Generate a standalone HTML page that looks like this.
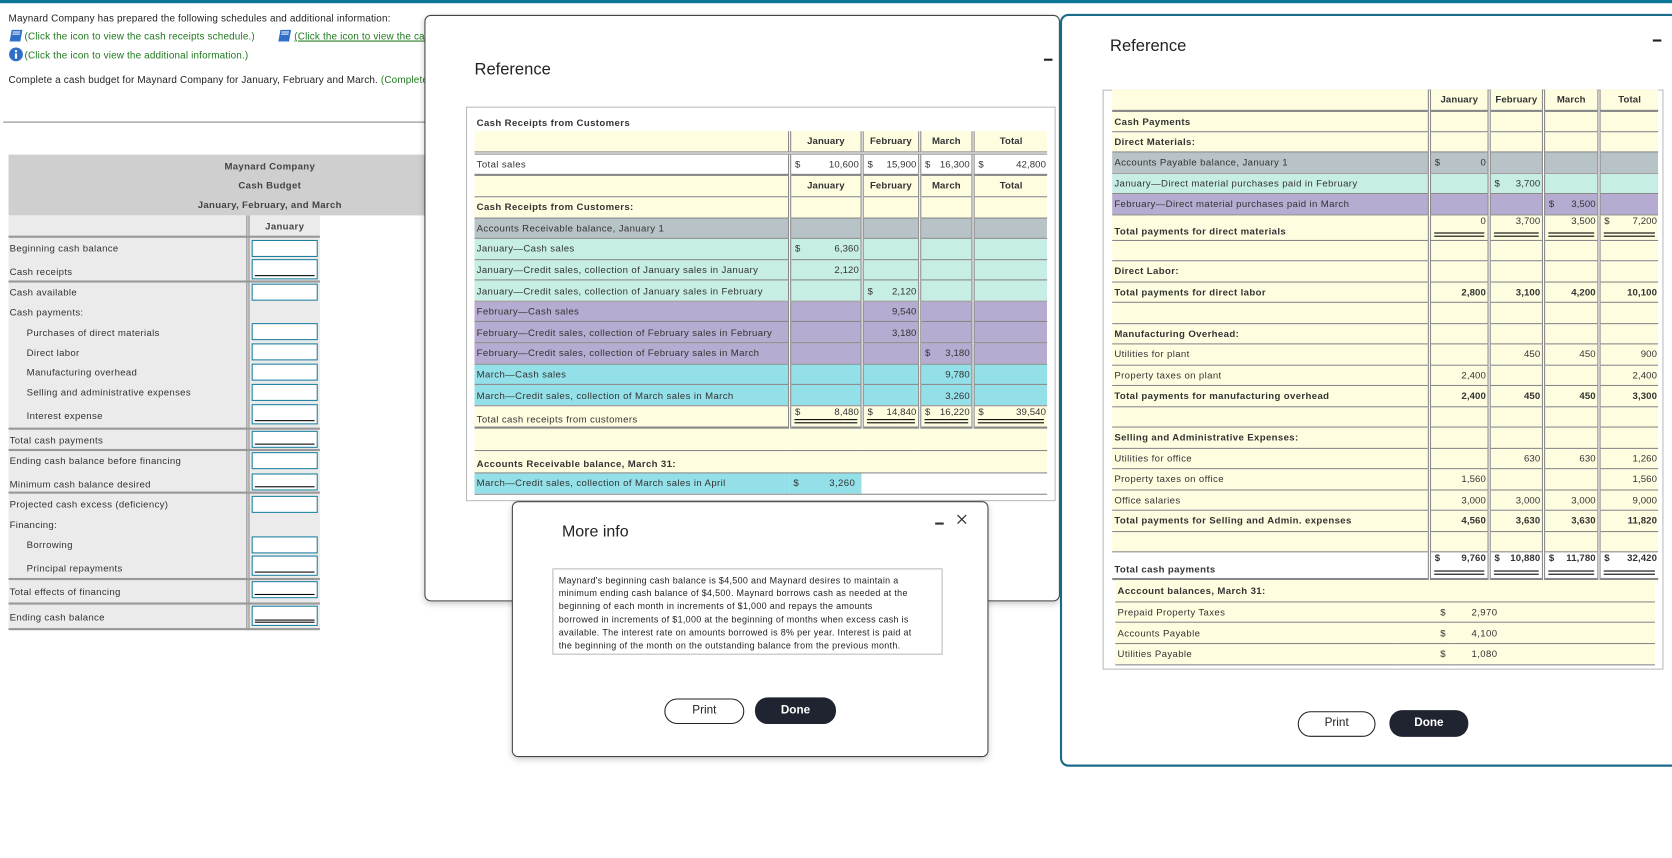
<!DOCTYPE html>
<html><head><meta charset="utf-8">
<style>
html,body{margin:0;padding:0;background:#fff;overflow:hidden;width:1672px;height:858px}
#w{position:absolute;left:0;top:0;width:1568px;height:805px;transform:scale(1.06633);transform-origin:0 0;font-family:"Liberation Sans",Arial,sans-serif;color:#222}
.a{position:absolute;white-space:nowrap}
.s9{font-size:9.3px;letter-spacing:.15px}
.g{color:#1f7a1f}
.hr{position:absolute;height:2px;background:#999}
.inp{position:absolute;left:236px;width:60px;height:14px;border:1px solid #1a7fa0;background:#fff}
.inp.u::after{content:"";position:absolute;left:2px;right:2px;bottom:2px;height:1px;background:#000}
.inp.dd::after{content:"";position:absolute;left:2px;right:2px;bottom:2px;height:3px;border-top:1px solid #000;border-bottom:1px solid #000;box-sizing:border-box}
.lbl{position:absolute;font-size:9px;letter-spacing:.3px;color:#333;white-space:nowrap}
.modal{position:absolute;background:#fff;border:1px solid #444;border-radius:6px;box-shadow:0 2px 6px rgba(0,0,0,.2)}
.t{position:absolute;border-collapse:collapse;table-layout:fixed;font-size:9px;letter-spacing:.35px;color:#333}
.t td{padding:0 2px;border-bottom:1px solid #888;white-space:nowrap;overflow:hidden;vertical-align:middle}
.t td.n{border-left:3px double #888;text-align:right;padding-right:1px;letter-spacing:.1px}
.t .d{float:left;padding-left:2px}
.b{font-weight:bold}
.c{text-align:center!important}
.cr{background:#fefde0}
.gr{background:#b8c3c7}
.mi{background:#c6eee4}
.lv{background:#b6abd0}
.cy{background:#93e0e8}
.dbl{background-image:linear-gradient(#000,#000),linear-gradient(#000,#000);background-size:calc(100% - 6px) 1px,calc(100% - 6px) 1px;background-position:3px calc(100% - 6px),3px calc(100% - 3px);background-repeat:no-repeat}
.btn{position:absolute;height:22px;border-radius:12px;font-size:11px;text-align:center;line-height:22px;box-sizing:border-box}
.pr{border:1.5px solid #222;color:#222;background:#fff}
.dn{background:#1f2430;color:#fff;font-weight:bold}
</style></head><body><div id="w">
<div class="a" style="left:0;top:0;width:1568px;height:3px;background:#0b7497"></div>

<div class="a s9" style="left:8px;top:12px">Maynard Company has prepared the following schedules and additional information:</div>
<svg class="a" style="left:8px;top:27px" width="14" height="13" viewBox="0 0 14 13"><path d="M3 1h10l-2 11H1z" fill="#2f6fc7"/><path d="M4 3h7M3.6 5h7" stroke="#fff" stroke-width="1"/><path d="M1 12h9" stroke="#9cc3ef" stroke-width="1"/></svg>
<div class="a s9 g" style="left:23px;top:29px">(Click the icon to view the cash receipts schedule.)</div>
<svg class="a" style="left:260px;top:27px" width="14" height="13" viewBox="0 0 14 13"><path d="M3 1h10l-2 11H1z" fill="#2f6fc7"/><path d="M4 3h7M3.6 5h7" stroke="#fff" stroke-width="1"/><path d="M1 12h9" stroke="#9cc3ef" stroke-width="1"/></svg>
<div class="a s9 g" style="left:276px;top:29px;text-decoration:underline">(Click the icon to view the cash payments schedule.)</div>
<svg class="a" style="left:8px;top:44px" width="14" height="14" viewBox="0 0 14 14"><circle cx="7" cy="7" r="6.5" fill="#2f6fc7"/><rect x="6" y="6" width="2" height="5" fill="#fff"/><circle cx="7" cy="4" r="1.1" fill="#fff"/></svg>
<div class="a s9 g" style="left:23px;top:47px">(Click the icon to view the additional information.)</div>
<div class="a s9" style="left:8px;top:70px">Complete a cash budget for Maynard Company for January, February and March. <span class="g">(Complete all input fields.)</span></div>
<div class="hr" style="left:3px;top:114px;width:400px;height:1px;background:#888"></div>

<!-- Cash budget -->
<div class="a" style="left:8px;top:145px;width:400px;height:57px;background:#cfcfcf"></div>
<div class="a b" style="left:8px;top:151px;width:490px;text-align:center;font-size:9px;letter-spacing:.3px;color:#444">Maynard Company</div>
<div class="a b" style="left:8px;top:169px;width:490px;text-align:center;font-size:9px;letter-spacing:.3px;color:#444">Cash Budget</div>
<div class="a b" style="left:8px;top:187px;width:490px;text-align:center;font-size:9px;letter-spacing:.3px;color:#444">January, February, and March</div>
<div class="a" style="left:8px;top:202px;width:292px;height:389px;background:#ebebeb"></div>
<div class="a" style="left:231px;top:202px;width:1px;height:389px;background:#888"></div>
<div class="a" style="left:233px;top:202px;width:1px;height:389px;background:#888"></div>
<div class="a b" style="left:234px;top:207px;width:66px;text-align:center;font-size:9px;letter-spacing:.3px;color:#444">January</div>
<div class="hr" style="left:8px;top:221px;width:292px"></div>
<div class="hr" style="left:8px;top:263px;width:292px"></div>
<div class="hr" style="left:8px;top:401px;width:292px"></div>
<div class="hr" style="left:8px;top:421px;width:292px"></div>
<div class="hr" style="left:8px;top:461px;width:292px"></div>
<div class="hr" style="left:8px;top:542px;width:292px"></div>
<div class="hr" style="left:8px;top:565px;width:292px"></div>
<div class="hr" style="left:8px;top:589px;width:292px"></div>

<div class="lbl" style="left:9px;top:228px">Beginning cash balance</div><div class="inp" style="top:225px"></div>
<div class="lbl" style="left:9px;top:250px">Cash receipts</div><div class="inp u" style="top:243px;height:17px"></div>
<div class="lbl" style="left:9px;top:269px">Cash available</div><div class="inp" style="top:266px"></div>
<div class="lbl" style="left:9px;top:288px">Cash payments:</div>
<div class="lbl" style="left:25px;top:307px">Purchases of direct materials</div><div class="inp" style="top:303px"></div>
<div class="lbl" style="left:25px;top:326px">Direct labor</div><div class="inp" style="top:322px"></div>
<div class="lbl" style="left:25px;top:344px">Manufacturing overhead</div><div class="inp" style="top:341px"></div>
<div class="lbl" style="left:25px;top:363px">Selling and administrative expenses</div><div class="inp" style="top:360px"></div>
<div class="lbl" style="left:25px;top:385px">Interest expense</div><div class="inp u" style="top:379px;height:17px"></div>
<div class="lbl" style="left:9px;top:408px">Total cash payments</div><div class="inp u" style="top:404px"></div>
<div class="lbl" style="left:9px;top:427px">Ending cash balance before financing</div><div class="inp" style="top:424px"></div>
<div class="lbl" style="left:9px;top:449px">Minimum cash balance desired</div><div class="inp u" style="top:444px"></div>
<div class="lbl" style="left:9px;top:468px">Projected cash excess (deficiency)</div><div class="inp" style="top:465px"></div>
<div class="lbl" style="left:9px;top:487px">Financing:</div>
<div class="lbl" style="left:25px;top:506px">Borrowing</div><div class="inp" style="top:503px"></div>
<div class="lbl" style="left:25px;top:528px">Principal repayments</div><div class="inp u" style="top:521px;height:17px"></div>
<div class="lbl" style="left:9px;top:550px">Total effects of financing</div><div class="inp u" style="top:545px"></div>
<div class="lbl" style="left:9px;top:574px">Ending cash balance</div><div class="inp dd" style="top:568px;height:17px"></div>

<!-- Modal 1 -->
<div class="modal" style="left:398px;top:14px;width:594px;height:548px"></div>
<div class="a" style="left:445px;top:57px;font-size:15.5px">Reference</div>
<div class="a b" style="left:979px;top:55px;width:8px;height:2px;background:#222"></div>
<div class="a" style="left:437px;top:100px;width:551px;height:368px;border:1px solid #bbb"></div>
<div class="a b" style="left:447px;top:110px;font-size:9px;letter-spacing:.35px;color:#333">Cash Receipts from Customers</div>
<table class="t" style="left:445px;top:123px;width:537px">
<colgroup><col style="width:295px"><col style="width:68px"><col style="width:54px"><col style="width:50px"><col style="width:70px"></colgroup>
<tr class="cr b" style="height:20px"><td style="border-bottom:3px double #888"></td><td class="n c" style="border-bottom:3px double #888">January</td><td class="n c" style="border-bottom:3px double #888">February</td><td class="n c" style="border-bottom:3px double #888">March</td><td class="n c" style="border-bottom:3px double #888">Total</td></tr>
<tr style="height:21px"><td style="border-bottom:2px solid #888">Total sales</td><td class="n" style="border-bottom:2px solid #888"><span class="d">$</span>10,600</td><td class="n" style="border-bottom:2px solid #888"><span class="d">$</span>15,900</td><td class="n" style="border-bottom:2px solid #888"><span class="d">$</span>16,300</td><td class="n" style="border-bottom:2px solid #888"><span class="d">$</span>42,800</td></tr>
<tr class="cr b" style="height:20px"><td></td><td class="n c">January</td><td class="n c">February</td><td class="n c">March</td><td class="n c">Total</td></tr>
<tr class="cr" style="height:20px"><td class="b">Cash Receipts from Customers:</td><td class="n"></td><td class="n"></td><td class="n"></td><td class="n"></td></tr>
<tr class="gr" style="height:19.6px"><td>Accounts Receivable balance, January 1</td><td class="n"></td><td class="n"></td><td class="n"></td><td class="n"></td></tr>
<tr class="mi" style="height:19.6px"><td>January—Cash sales</td><td class="n"><span class="d">$</span>6,360</td><td class="n"></td><td class="n"></td><td class="n"></td></tr>
<tr class="mi" style="height:19.6px"><td>January—Credit sales, collection of January sales in January</td><td class="n">2,120</td><td class="n"></td><td class="n"></td><td class="n"></td></tr>
<tr class="mi" style="height:19.6px"><td>January—Credit sales, collection of January sales in February</td><td class="n"></td><td class="n"><span class="d">$</span>2,120</td><td class="n"></td><td class="n"></td></tr>
<tr class="lv" style="height:19.6px"><td>February—Cash sales</td><td class="n"></td><td class="n">9,540</td><td class="n"></td><td class="n"></td></tr>
<tr class="lv" style="height:19.6px"><td>February—Credit sales, collection of February sales in February</td><td class="n"></td><td class="n">3,180</td><td class="n"></td><td class="n"></td></tr>
<tr class="lv" style="height:19.6px"><td>February—Credit sales, collection of February sales in March</td><td class="n"></td><td class="n"></td><td class="n"><span class="d">$</span>3,180</td><td class="n"></td></tr>
<tr class="cy" style="height:19.6px"><td>March—Cash sales</td><td class="n"></td><td class="n"></td><td class="n">9,780</td><td class="n"></td></tr>
<tr class="cy" style="height:19.6px"><td>March—Credit sales, collection of March sales in March</td><td class="n"></td><td class="n"></td><td class="n">3,260</td><td class="n"></td></tr>
<tr class="cr" style="height:21px"><td style="vertical-align:bottom;padding-bottom:2px;border-bottom:2px solid #888">Total cash receipts from customers</td><td class="n dbl" style="vertical-align:top;border-bottom:2px solid #888"><span class="d">$</span>8,480</td><td class="n dbl" style="vertical-align:top;border-bottom:2px solid #888"><span class="d">$</span>14,840</td><td class="n dbl" style="vertical-align:top;border-bottom:2px solid #888"><span class="d">$</span>16,220</td><td class="n dbl" style="vertical-align:top;border-bottom:2px solid #888"><span class="d">$</span>39,540</td></tr>
<tr class="cr" style="height:21px"><td colspan="5"></td></tr>
<tr class="cr" style="height:21px"><td colspan="5" class="b" style="vertical-align:bottom;padding-bottom:3px">Accounts Receivable balance, March 31:</td></tr>
<tr style="height:20px"><td class="cy">March—Credit sales, collection of March sales in April</td><td class="cy" style="text-align:right;padding-right:6px"><span class="d">$</span>3,260</td><td colspan="3"></td></tr>
</table>

<!-- More info -->
<div class="modal" style="left:480px;top:470px;width:445px;height:238px;border-radius:6px"></div>
<div class="a" style="left:527px;top:490px;font-size:15px">More info</div>
<div class="a" style="left:877px;top:490px;width:8px;height:2px;background:#333"></div>
<svg class="a" style="left:897px;top:482px" width="10" height="10" viewBox="0 0 10 10"><path d="M1 1L9 9M9 1L1 9" stroke="#333" stroke-width="1.2"/></svg>
<div class="a" style="left:518px;top:533px;width:366px;height:81px;border:1px solid #bbb;box-sizing:border-box;padding:4px 5px;white-space:nowrap;overflow:hidden;font-size:8.4px;letter-spacing:.3px;line-height:12.2px;color:#222">Maynard's beginning cash balance is $4,500 and Maynard desires to maintain a<br>minimum ending cash balance of $4,500. Maynard borrows cash as needed at the<br>beginning of each month in increments of $1,000 and repays the amounts<br>borrowed in increments of $1,000 at the beginning of months when excess cash is<br>available. The interest rate on amounts borrowed is 8% per year. Interest is paid at<br>the beginning of the month on the outstanding balance from the previous month.</div>
<div class="btn pr" style="left:623px;top:655px;width:75px;height:24px;line-height:21px">Print</div>
<div class="btn dn" style="left:708px;top:654px;width:76px;height:25px;line-height:25px">Done</div>

<!-- Modal 2 -->
<div class="a" style="left:994px;top:13px;width:600px;height:706px;border:2px solid #1a6a8a;border-radius:8px;background:#fff;box-sizing:border-box"></div>
<div class="a" style="left:1041px;top:35px;font-size:15.5px">Reference</div>
<div class="a" style="left:1550px;top:37px;width:8px;height:2px;background:#222"></div>
<div class="a" style="left:1034px;top:84px;width:526px;height:544px;border:1px solid #bbb;box-sizing:border-box"></div>
<table class="t" style="left:1043px;top:84px;width:512px">
<colgroup><col style="width:297px"><col style="width:56px"><col style="width:51px"><col style="width:52px"><col style="width:56px"></colgroup>
<tr class="cr b" style="height:19.5px"><td style="border-bottom:2px solid #888"></td><td class="n c" style="border-bottom:2px solid #888">January</td><td class="n c" style="border-bottom:2px solid #888">February</td><td class="n c" style="border-bottom:2px solid #888">March</td><td class="n c" style="border-bottom:2px solid #888">Total</td></tr>
<tr class="cr" style="height:19.5px"><td class="b">Cash Payments</td><td class="n"></td><td class="n"></td><td class="n"></td><td class="n"></td></tr>
<tr class="cr" style="height:19.5px"><td class="b">Direct Materials:</td><td class="n"></td><td class="n"></td><td class="n"></td><td class="n"></td></tr>
<tr class="gr" style="height:19.5px"><td>Accounts Payable balance, January 1</td><td class="n"><span class="d">$</span>0</td><td class="n"></td><td class="n"></td><td class="n"></td></tr>
<tr class="mi" style="height:19.5px"><td>January—Direct material purchases paid in February</td><td class="n"></td><td class="n"><span class="d">$</span>3,700</td><td class="n"></td><td class="n"></td></tr>
<tr class="lv" style="height:19.5px"><td>February—Direct material purchases paid in March</td><td class="n"></td><td class="n"></td><td class="n"><span class="d">$</span>3,500</td><td class="n"></td></tr>
<tr class="cr" style="height:24px"><td class="b" style="vertical-align:bottom;padding-bottom:3px">Total payments for direct materials</td><td class="n dbl" style="vertical-align:top">0</td><td class="n dbl" style="vertical-align:top">3,700</td><td class="n dbl" style="vertical-align:top">3,500</td><td class="n dbl" style="vertical-align:top"><span class="d">$</span>7,200</td></tr>
<tr class="cr" style="height:19.5px"><td></td><td class="n"></td><td class="n"></td><td class="n"></td><td class="n"></td></tr>
<tr class="cr" style="height:19.5px"><td class="b">Direct Labor:</td><td class="n"></td><td class="n"></td><td class="n"></td><td class="n"></td></tr>
<tr class="cr b" style="height:19.5px"><td>Total payments for direct labor</td><td class="n">2,800</td><td class="n">3,100</td><td class="n">4,200</td><td class="n">10,100</td></tr>
<tr class="cr" style="height:19.5px"><td></td><td class="n"></td><td class="n"></td><td class="n"></td><td class="n"></td></tr>
<tr class="cr" style="height:19.5px"><td class="b">Manufacturing Overhead:</td><td class="n"></td><td class="n"></td><td class="n"></td><td class="n"></td></tr>
<tr class="cr" style="height:19.5px"><td>Utilities for plant</td><td class="n"></td><td class="n">450</td><td class="n">450</td><td class="n">900</td></tr>
<tr class="cr" style="height:19.5px"><td>Property taxes on plant</td><td class="n">2,400</td><td class="n"></td><td class="n"></td><td class="n">2,400</td></tr>
<tr class="cr b" style="height:19.5px"><td>Total payments for manufacturing overhead</td><td class="n">2,400</td><td class="n">450</td><td class="n">450</td><td class="n">3,300</td></tr>
<tr class="cr" style="height:19.5px"><td></td><td class="n"></td><td class="n"></td><td class="n"></td><td class="n"></td></tr>
<tr class="cr" style="height:19.5px"><td class="b">Selling and Administrative Expenses:</td><td class="n"></td><td class="n"></td><td class="n"></td><td class="n"></td></tr>
<tr class="cr" style="height:19.5px"><td>Utilities for office</td><td class="n"></td><td class="n">630</td><td class="n">630</td><td class="n">1,260</td></tr>
<tr class="cr" style="height:19.5px"><td>Property taxes on office</td><td class="n">1,560</td><td class="n"></td><td class="n"></td><td class="n">1,560</td></tr>
<tr class="cr" style="height:19.5px"><td>Office salaries</td><td class="n">3,000</td><td class="n">3,000</td><td class="n">3,000</td><td class="n">9,000</td></tr>
<tr class="cr b" style="height:19.5px"><td>Total payments for Selling and Admin. expenses</td><td class="n">4,560</td><td class="n">3,630</td><td class="n">3,630</td><td class="n">11,820</td></tr>
<tr class="cr" style="height:19.5px"><td></td><td class="n"></td><td class="n"></td><td class="n"></td><td class="n"></td></tr>
<tr class="b" style="height:25px"><td style="vertical-align:bottom;padding-bottom:3px;border-bottom:2px solid #888">Total cash payments</td><td class="n dbl" style="vertical-align:top;border-bottom:2px solid #888"><span class="d">$</span>9,760</td><td class="n dbl" style="vertical-align:top;border-bottom:2px solid #888"><span class="d">$</span>10,880</td><td class="n dbl" style="vertical-align:top;border-bottom:2px solid #888"><span class="d">$</span>11,780</td><td class="n dbl" style="vertical-align:top;border-bottom:2px solid #888"><span class="d">$</span>32,420</td></tr>
</table>
<table class="t" style="left:1046px;top:544px;width:506px">
<colgroup><col style="width:262px"><col style="width:50px"><col style="width:194px"></colgroup>
<tr class="cr" style="height:20px"><td colspan="3" class="b">Acccount balances, March 31:</td></tr>
<tr class="cr" style="height:19.7px"><td>Prepaid Property Taxes</td><td style="text-align:right">$</td><td style="padding-left:22px">2,970</td></tr>
<tr class="cr" style="height:19.7px"><td>Accounts Payable</td><td style="text-align:right">$</td><td style="padding-left:22px">4,100</td></tr>
<tr class="cr" style="height:19.7px"><td>Utilities Payable</td><td style="text-align:right">$</td><td style="padding-left:22px">1,080</td></tr>
</table>
<div class="btn pr" style="left:1217px;top:667px;width:73px;height:24px;line-height:21px">Print</div>
<div class="btn dn" style="left:1303px;top:666px;width:74px;height:25px;line-height:25px">Done</div>
</div></body></html>
